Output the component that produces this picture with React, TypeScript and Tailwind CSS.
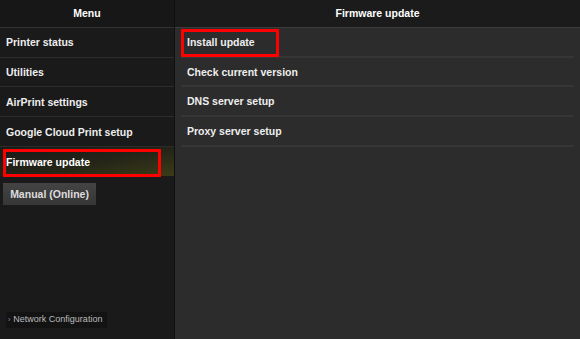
import React from "react";

const leftItems = ["Printer status", "Utilities", "AirPrint settings", "Google Cloud Print setup"];
const rightItems = ["Install update", "Check current version", "DNS server setup", "Proxy server setup"];

export default function App() {
  return (
    <div
      className="relative flex h-[339px] w-[580px] overflow-hidden bg-[#1a1a1a] text-[10.5px] font-bold text-[#eeeeee]"
      style={{ fontFamily: '"Liberation Sans", Arial, sans-serif' }}
    >
      {/* Left menu */}
      <div className="flex w-[175px] shrink-0 flex-col border-r border-[#101010] bg-[#1a1a1a]">
        <div className="flex h-[28px] shrink-0 items-center justify-center border-b border-[#333333] bg-[#171717] pt-[1px] text-white">
          Menu
        </div>
        {leftItems.map((t) => (
          <div key={t} className="flex h-[29.7px] shrink-0 items-center border-b border-[#2c2c2c] pl-[6px] pt-[2px]">
            {t}
          </div>
        ))}
        <div className="flex h-[29.7px] shrink-0 items-center bg-linear-to-br from-[#1a1a18] via-[#232318] to-[#3c3c16] pl-[6px] pt-[2px] text-white">
          Firmware update
        </div>
        <div className="mt-[7px] ml-[3px] flex h-[22px] w-[93px] items-center justify-center bg-linear-to-b from-[#444444] to-[#363636] pt-[1px] text-[#dddddd]">
          Manual (Online)
        </div>
        <div className="flex-1" />
        <div className="mb-[11px] ml-[6px] flex h-[16px] w-[101px] items-center gap-[3px] bg-[#131313] pl-[2px] text-[9px] font-normal text-[#bbbbbb]">
          <span className="text-[7px] text-[#999999]">›</span>
          <span>Network Configuration</span>
        </div>
      </div>

      {/* Right panel */}
      <div className="flex flex-1 flex-col bg-[#2c2c2c]">
        <div className="flex h-[28px] shrink-0 items-center justify-center border-b border-[#3c3c3c] bg-[#1b1b1b] pt-[1px] text-white">
          Firmware update
        </div>
        <div className="mx-[6px] flex flex-col">
          {rightItems.map((t) => (
            <div key={t} className="flex h-[29.7px] items-center border-b-2 border-[#363636] pl-[6px] pt-[2px]">
              {t}
            </div>
          ))}
        </div>
      </div>

      {/* Annotation boxes */}
      <div className="pointer-events-none absolute left-[3px] top-[149px] h-[28px] w-[158px] border-[3px] border-[#ff0000]" />
      <div className="pointer-events-none absolute left-[181px] top-[29px] h-[28px] w-[98px] border-[3px] border-[#ff0000]" />
    </div>
  );
}
